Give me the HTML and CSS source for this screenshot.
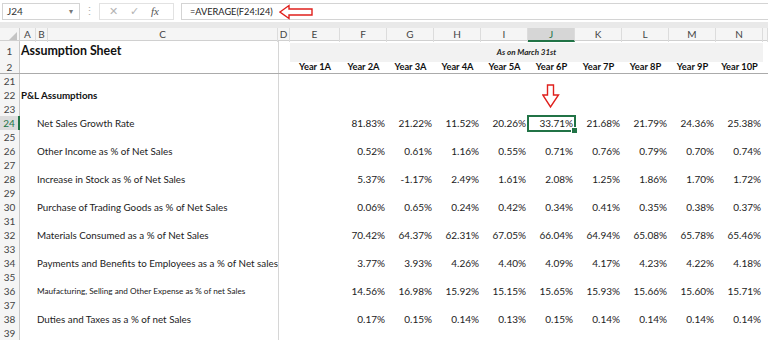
FILE: index.html
```html
<!DOCTYPE html>
<html lang="en">
<head>
    <meta charset="UTF-8">
    <title>Assumption Sheet</title>
    <link rel="stylesheet" href="styles.css">
</head>
<body>
    <div class="app">
        <div class="fbar">
            <div class="namebox"><span>J24</span><span class="caret">&#9662;</span></div>
            <div class="grip">&#8942;</div>
            <div class="fbtns">
                <span class="btn">&#10005;</span>
                <span class="btn">&#10003;</span>
                <span class="btn fx">fx</span>
            </div>
            <div class="formula">=AVERAGE(F24:I24)</div>
        </div>
        <div class="gap"></div>

        <div class="sheet" id="sheet">
            <div class="row colhead" id="colhead"></div>
            <div class="row r1">
                <div class="rh">1</div>
                <div class="title">Assumption Sheet</div>
                <div class="d"></div>
                <div class="asof">As on March 31st</div>
                <div></div>
            </div>
            <div class="row r2" id="years">
                <div class="rh">2</div>
                <div class="lbl"></div>
                <div class="d"></div>
            </div>
        </div>

        <!-- annotation arrows -->
        <svg class="arrow-left" width="36" height="16" viewBox="0 0 36 16">
            <polygon points="1,8 10,1.5 10,5 33,5 33,11 10,11 10,14.5" fill="#fff" stroke="#e0201c" stroke-width="1.4"/>
        </svg>
        <svg class="arrow-down" width="18" height="25" viewBox="0 0 18 25">
            <polygon points="5.5,1 11.5,1 11.5,11 16.5,11 8.5,23 0.8,11 5.5,11" fill="#fff" stroke="#e0201c" stroke-width="1.4"/>
        </svg>
    </div>

    <script>
        const letters = ["A", "B", "C", "D", "E", "F", "G", "H", "I", "J", "K", "L", "M", "N", ""];
        const years = ["Year 1A", "Year 2A", "Year 3A", "Year 4A", "Year 5A", "Year 6P", "Year 7P", "Year 8P", "Year 9P", "Year 10P"];

        // filas de datos (fila, texto, valores F..N)
        const rows = {
            22: { label: "P&L Assumptions", head: true },
            24: { label: "Net Sales Growth Rate", values: ["81.83%", "21.22%", "11.52%", "20.26%", "33.71%", "21.68%", "21.79%", "24.36%", "25.38%"] },
            26: { label: "Other Income as % of Net Sales", values: ["0.52%", "0.61%", "1.16%", "0.55%", "0.71%", "0.76%", "0.79%", "0.70%", "0.74%"] },
            28: { label: "Increase in Stock as % of Net Sales", values: ["5.37%", "-1.17%", "2.49%", "1.61%", "2.08%", "1.25%", "1.86%", "1.70%", "1.72%"] },
            30: { label: "Purchase of Trading Goods as % of Net Sales", values: ["0.06%", "0.65%", "0.24%", "0.42%", "0.34%", "0.41%", "0.35%", "0.38%", "0.37%"] },
            32: { label: "Materials Consumed as a % of Net Sales", values: ["70.42%", "64.37%", "62.31%", "67.05%", "66.04%", "64.94%", "65.08%", "65.78%", "65.46%"] },
            34: { label: "Payments and Benefits to Employees as a % of Net sales", values: ["3.77%", "3.93%", "4.26%", "4.40%", "4.09%", "4.17%", "4.23%", "4.22%", "4.18%"] },
            36: { label: "Maufacturing, Selling and Other Expense as % of net Sales", small: true, values: ["14.56%", "16.98%", "15.92%", "15.15%", "15.65%", "15.93%", "15.66%", "15.60%", "15.71%"] },
            38: { label: "Duties and Taxes as a % of net Sales", values: ["0.17%", "0.15%", "0.14%", "0.13%", "0.15%", "0.14%", "0.14%", "0.14%", "0.14%"] }
        };

        function cell(parent, cls, text) {
            const div = document.createElement("div");
            if (cls) div.className = cls;
            if (text) div.textContent = text;
            parent.appendChild(div);
            return div;
        }

        // cabecera de columnas
        const colhead = document.getElementById("colhead");
        cell(colhead, "corner");
        letters.forEach(l => cell(colhead, l === "J" ? "ch active" : "ch", l));

        // fila 2: años
        const yearRow = document.getElementById("years");
        years.forEach(y => cell(yearRow, "year", y));
        cell(yearRow, "");

        // filas 21 a 39
        const sheet = document.getElementById("sheet");
        for (let n = 21; n <= 39; n++) {
            const data = rows[n] || {};
            const row = cell(sheet, "row");
            cell(row, n === 24 ? "rh active" : "rh", String(n));

            let lblClass = "lbl";
            if (data.head) lblClass += " head";
            else if (data.small) lblClass += " small";
            cell(row, lblClass, data.label || "");
            cell(row, "d");
            cell(row, "");

            for (let i = 0; i < 9; i++) {
                const v = data.values ? data.values[i] : "";
                cell(row, n === 24 && i === 4 ? "num sel" : "num", v);
            }
            cell(row, "");
        }
    </script>
</body>
</html>
```

FILE: styles.css
```css
* {
    box-sizing: border-box;
}
body {
    margin: 0;
    font-family: Lato, "Open Sans", sans-serif;
    color: #222;
    background: #fff;
}
.app {
    position: relative;
    width: 768px;
    height: 340px;
    overflow: hidden;
}

/* barra de fórmulas */
.fbar {
    display: flex;
    align-items: center;
    height: 22px;
    padding: 0 0 0 2px;
    background: #fff;
}
.namebox {
    display: flex;
    justify-content: space-between;
    align-items: center;
    width: 78px;
    height: 17px;
    padding: 0 6px 0 4px;
    border: 1px solid #d4d4d4;
    font-size: 10px;
    color: #333;
}
.caret {
    font-size: 8px;
    color: #777;
}
.grip {
    width: 19px;
    text-align: center;
    font-size: 11px;
    color: #b0b0b0;
}
.fbtns {
    display: flex;
    align-items: center;
    width: 75px;
    height: 17px;
    padding-left: 9px;
    gap: 12px;
    border: 1px solid #e2e2e2;
    font-size: 11px;
    color: #b4b4b4;
}
.fbtns .fx {
    font-family: "Liberation Serif", serif;
    font-style: italic;
    color: #555;
}
.formula {
    flex: 1;
    height: 17px;
    margin-left: 7px;
    padding: 2px 8px;
    border: 1px solid #d4d4d4;
    border-right: none;
    font-size: 9.2px;
    color: #222;
}
.gap {
    height: 6px;
    background: #e9e9e9;
}

/* hoja */
.row {
    display: grid;
    grid-template-columns: 20px 16px 12px 230px 12px 50px repeat(9, 47px) 1fr;
    height: 14px;
    font-size: 10px;
    line-height: 14px;
}
.colhead {
    height: 13px;
    line-height: 12px;
    background: #f5f5f5;
    border-bottom: 1px solid #d0d0d0;
}
.corner {
    position: relative;
    border-right: 1px solid #d0d0d0;
}
.corner::after {
    content: "";
    position: absolute;
    right: 2px;
    bottom: 2px;
    border-left: 8px solid transparent;
    border-bottom: 8px solid #c4c4c4;
}
.ch {
    text-align: center;
    color: #444;
    border-right: 1px solid #dcdcdc;
}
.ch.active {
    background: #d6d6d6;
    color: #217346;
    border-bottom: 2px solid #217346;
}
.rh {
    text-align: center;
    color: #444;
    background: #f5f5f5;
    border-right: 1px solid #c8c8c8;
    border-bottom: 1px solid #e0e0e0;
}
.rh.active {
    background: #dcdcdc;
    color: #217346;
    border-right: 2px solid #217346;
}
.r1 {
    height: 20px;
    line-height: 20px;
}
.r1 .title {
    grid-column: 2 / 5;
    padding-left: 1px;
    font-size: 12.4px;
    font-weight: bold;
    color: #111;
}
.asof {
    grid-column: 6 / 16;
    margin-top: 2px;
    background: #f2f2f2;
    text-align: center;
    font-size: 8px;
    line-height: 18px;
    font-style: italic;
    font-weight: bold;
}
.r2 {
    height: 13px;
    line-height: 12px;
    border-bottom: 1px solid #ababab;
}
.r2 .rh {
    border-bottom: none;
}
.year {
    text-align: center;
    font-size: 9.3px;
    font-weight: bold;
    color: #111;
}
.lbl {
    grid-column: 3 / 5;
    padding-left: 1px;
    font-size: 9.8px;
    white-space: nowrap;
    overflow: visible;
}
.lbl.head {
    grid-column: 2 / 5;
    font-weight: bold;
    color: #111;
}
.lbl.small {
    font-size: 8.2px;
}
.d {
    border-left: 1px solid #d6d6d6;
}
.num {
    text-align: right;
    padding-right: 2px;
}
.sel {
    position: relative;
    outline: 2px solid #217346;
    outline-offset: -1px;
}
.sel::after {
    content: "";
    position: absolute;
    right: -3px;
    bottom: -3px;
    width: 5px;
    height: 5px;
    background: #217346;
    border: 1px solid #fff;
}

/* flechas de anotación */
.arrow-left {
    position: absolute;
    left: 279px;
    top: 4px;
}
.arrow-down {
    position: absolute;
    left: 542px;
    top: 84px;
}
```
